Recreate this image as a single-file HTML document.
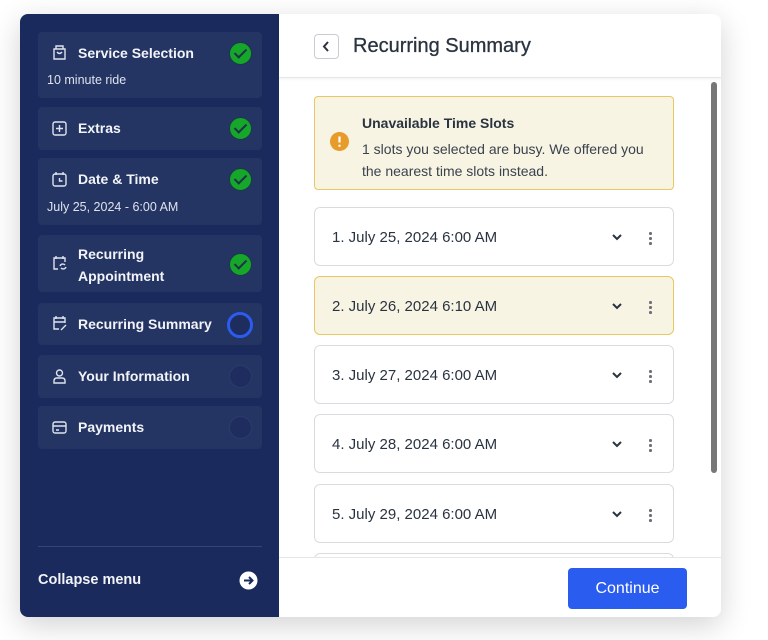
<!DOCTYPE html>
<html><head><meta charset="utf-8"><style>
*{box-sizing:border-box;margin:0;padding:0}
body{width:768px;height:640px;background:#fff;font-family:"Liberation Sans",sans-serif;position:relative;overflow:hidden}
.card{position:absolute;left:20px;top:14px;width:701px;height:603px;border-radius:8px;box-shadow:0 8px 30px rgba(0,0,0,.18);background:#fff;overflow:hidden}
.side{position:absolute;left:0;top:0;width:259px;height:603px;background:#1a2a5c}
.it{position:absolute;left:18px;width:224px;background:#243463;border-radius:4px;color:#fff}
.it .t{position:absolute;left:40px;font-size:14px;font-weight:bold;color:#f2f4f8}
.it .s{position:absolute;left:9px;font-size:12.5px;color:#dfe3ee}
.it svg.ic{position:absolute;left:13px;width:17px;height:17px}
.dot{position:absolute;left:191px;width:23px;height:23px;border-radius:50%}
.ok{background:#15a62a;border:1px solid #1a3a4a}
.ok::after{content:"";position:absolute;left:7px;top:3px;width:5px;height:10px;border:solid #1c3348;border-width:0 2px 2px 0;transform:rotate(45deg)}
.em{background:#1e2d5e;border:1px solid #2b3b6e}
.cur{border:3px solid #2b5cf0;background:#1e2d5e}
.main{position:absolute;left:259px;top:0;width:442px;height:603px}
.hdr{height:64px;border-bottom:1px solid #e6e6e6;box-shadow:0 1px 3px rgba(0,0,0,.06)}
.back{position:absolute;left:35px;top:20px;width:25px;height:25px;border:1px solid #c8ccd3;border-radius:4px}
.title{position:absolute;left:74px;top:21px;font-size:20px;color:#2a3340;-webkit-text-stroke:.3px #2a3340}
.alert{position:absolute;left:35px;top:82px;width:360px;height:94px;background:#f8f4e3;border:1px solid #e7c862;border-radius:4px}
.slot{position:absolute;left:35px;width:360px;height:59px;border:1px solid #d9dcdf;border-radius:6px;background:#fff;font-size:15px;color:#2a3340}
.slot span{position:absolute;left:17px;top:21px}
.slot.y{background:#f8f4e3;border-color:#e7c862}
.chev{position:absolute;left:296px;top:25px}
.kb{position:absolute;left:334px;top:24px;width:3px}
.kb i{display:block;width:2.5px;height:2.5px;border-radius:50%;background:#6a6f77;margin-bottom:2.5px}
.foot{position:absolute;left:0;top:543px;width:442px;height:60px;background:#fff;border-top:1px solid #e6e6e6}
.btn{position:absolute;left:289px;top:10px;width:119px;height:41px;background:#2b5cf0;border-radius:4px;color:#fff;font-size:16px;text-align:center;line-height:41px}
.sb{position:absolute;left:432px;top:68px;width:6px;height:391px;background:#777;border-radius:3px}
</style></head><body>
<div class="card">
<div class="side">
 <div class="it" style="top:18px;height:66px">
  <svg class="ic" style="top:12px" viewBox="0 0 17 17" fill="none" stroke="#dfe3ee" stroke-width="1.4"><path d="M3 5h11v10H3z M5 5V2h7v3 M6 8q2.5 3 5 0"/></svg>
  <div class="t" style="top:13px">Service Selection</div><div class="s" style="top:41px">10 minute ride</div>
  <div class="dot ok" style="top:10px"></div></div>
 <div class="it" style="top:93px;height:43px">
  <svg class="ic" style="top:13px" viewBox="0 0 17 17" fill="none" stroke="#dfe3ee" stroke-width="1.4"><rect x="2" y="2" width="13" height="13" rx="2"/><path d="M8.5 5v7M5 8.5h7"/></svg>
  <div class="t" style="top:13px">Extras</div><div class="dot ok" style="top:10px"></div></div>
 <div class="it" style="top:144px;height:67px">
  <svg class="ic" style="top:13px" viewBox="0 0 17 17" fill="none" stroke="#dfe3ee" stroke-width="1.4"><rect x="2" y="3" width="13" height="12" rx="2"/><path d="M5 1v3M12 1v3M8.5 7v3h3"/></svg>
  <div class="t" style="top:13px">Date &amp; Time</div><div class="s" style="top:42px">July 25, 2024 - 6:00 AM</div>
  <div class="dot ok" style="top:10px"></div></div>
 <div class="it" style="top:221px;height:57px">
  <svg class="ic" style="top:20px" viewBox="0 0 17 17" fill="none" stroke="#dfe3ee" stroke-width="1.4"><path d="M7 14H3V3h11v4M5 1v3M12 1v3M9 11a3 3 0 0 1 5-1M15 12a3 3 0 0 1-5 1"/></svg>
  <div class="t" style="top:8px;line-height:22px">Recurring<br>Appointment</div><div class="dot ok" style="top:18px"></div></div>
 <div class="it" style="top:289px;height:42px">
  <svg class="ic" style="top:12px" viewBox="0 0 17 17" fill="none" stroke="#dfe3ee" stroke-width="1.4"><path d="M8 14H3V3h11v5M5 1v3M12 1v3M3 7h11M10 15l5-5"/></svg>
  <div class="t" style="top:13px">Recurring Summary</div><div class="dot cur" style="top:9px;left:189px;width:26px;height:26px"></div></div>
 <div class="it" style="top:341px;height:43px">
  <svg class="ic" style="top:13px" viewBox="0 0 17 17" fill="none" stroke="#dfe3ee" stroke-width="1.4"><circle cx="8.5" cy="5" r="3"/><path d="M3 15v-2q0-3 3-3h5q3 0 3 3v2z"/></svg>
  <div class="t" style="top:13px">Your Information</div><div class="dot em" style="top:10px"></div></div>
 <div class="it" style="top:392px;height:43px">
  <svg class="ic" style="top:13px" viewBox="0 0 17 17" fill="none" stroke="#dfe3ee" stroke-width="1.4"><rect x="2" y="3" width="13" height="11" rx="2"/><path d="M2 7h13M5 11h3"/></svg>
  <div class="t" style="top:13px">Payments</div><div class="dot em" style="top:10px"></div></div>
 <div style="position:absolute;left:18px;top:532px;width:224px;height:1px;background:#34447a"></div>
 <div style="position:absolute;left:18px;top:558px;font-size:14.5px;font-weight:bold;color:#f2f4f8">Collapse menu</div>
 <svg style="position:absolute;left:219px;top:557px" width="19" height="19" viewBox="0 0 19 19"><circle cx="9.5" cy="9.5" r="9" fill="#fff"/><path d="M5 9.5h8M10 6l3.5 3.5L10 13" stroke="#1a2a5c" stroke-width="2" fill="none"/></svg>
</div>
<div class="main">
 <div class="hdr"></div>
 <div class="back"><svg width="23" height="23" viewBox="0 0 23 23"><path d="M13 7l-4 4.5 4 4.5" stroke="#2a3340" stroke-width="2" fill="none"/></svg></div>
 <div class="title">Recurring Summary</div>
 <div class="alert">
  <svg style="position:absolute;left:15px;top:35px" width="19" height="19" viewBox="0 0 19 19"><circle cx="9.5" cy="9.5" r="9.5" fill="#e69b2a"/><path d="M9.5 4.5v6" stroke="#fff" stroke-width="2.2"/><circle cx="9.5" cy="13.8" r="1.2" fill="#fff"/></svg>
  <div style="position:absolute;left:47px;top:18px;font-size:14px;font-weight:bold;color:#2a3340">Unavailable Time Slots</div>
  <div style="position:absolute;left:47px;top:41px;font-size:14px;color:#3a424e;line-height:22px">1 slots you selected are busy. We offered you<br>the nearest time slots instead.</div>
 </div>
 <div class="slot" style="top:193px"><span>1. July 25, 2024 6:00 AM</span><svg class="chev" width="12" height="8" viewBox="0 0 12 8"><path d="M2 2l4 4 4-4" stroke="#2a3340" stroke-width="2" fill="none"/></svg><div class="kb"><i></i><i></i><i></i></div></div>
 <div class="slot y" style="top:262px"><span>2. July 26, 2024 6:10 AM</span><svg class="chev" width="12" height="8" viewBox="0 0 12 8"><path d="M2 2l4 4 4-4" stroke="#2a3340" stroke-width="2" fill="none"/></svg><div class="kb"><i></i><i></i><i></i></div></div>
 <div class="slot" style="top:331px"><span>3. July 27, 2024 6:00 AM</span><svg class="chev" width="12" height="8" viewBox="0 0 12 8"><path d="M2 2l4 4 4-4" stroke="#2a3340" stroke-width="2" fill="none"/></svg><div class="kb"><i></i><i></i><i></i></div></div>
 <div class="slot" style="top:400px"><span>4. July 28, 2024 6:00 AM</span><svg class="chev" width="12" height="8" viewBox="0 0 12 8"><path d="M2 2l4 4 4-4" stroke="#2a3340" stroke-width="2" fill="none"/></svg><div class="kb"><i></i><i></i><i></i></div></div>
 <div class="slot" style="top:470px"><span>5. July 29, 2024 6:00 AM</span><svg class="chev" width="12" height="8" viewBox="0 0 12 8"><path d="M2 2l4 4 4-4" stroke="#2a3340" stroke-width="2" fill="none"/></svg><div class="kb"><i></i><i></i><i></i></div></div>
 <div class="slot" style="top:539px"></div>
 <div class="sb"></div>
 <div class="foot"><div class="btn">Continue</div></div>
</div>
</div>
</body></html>
